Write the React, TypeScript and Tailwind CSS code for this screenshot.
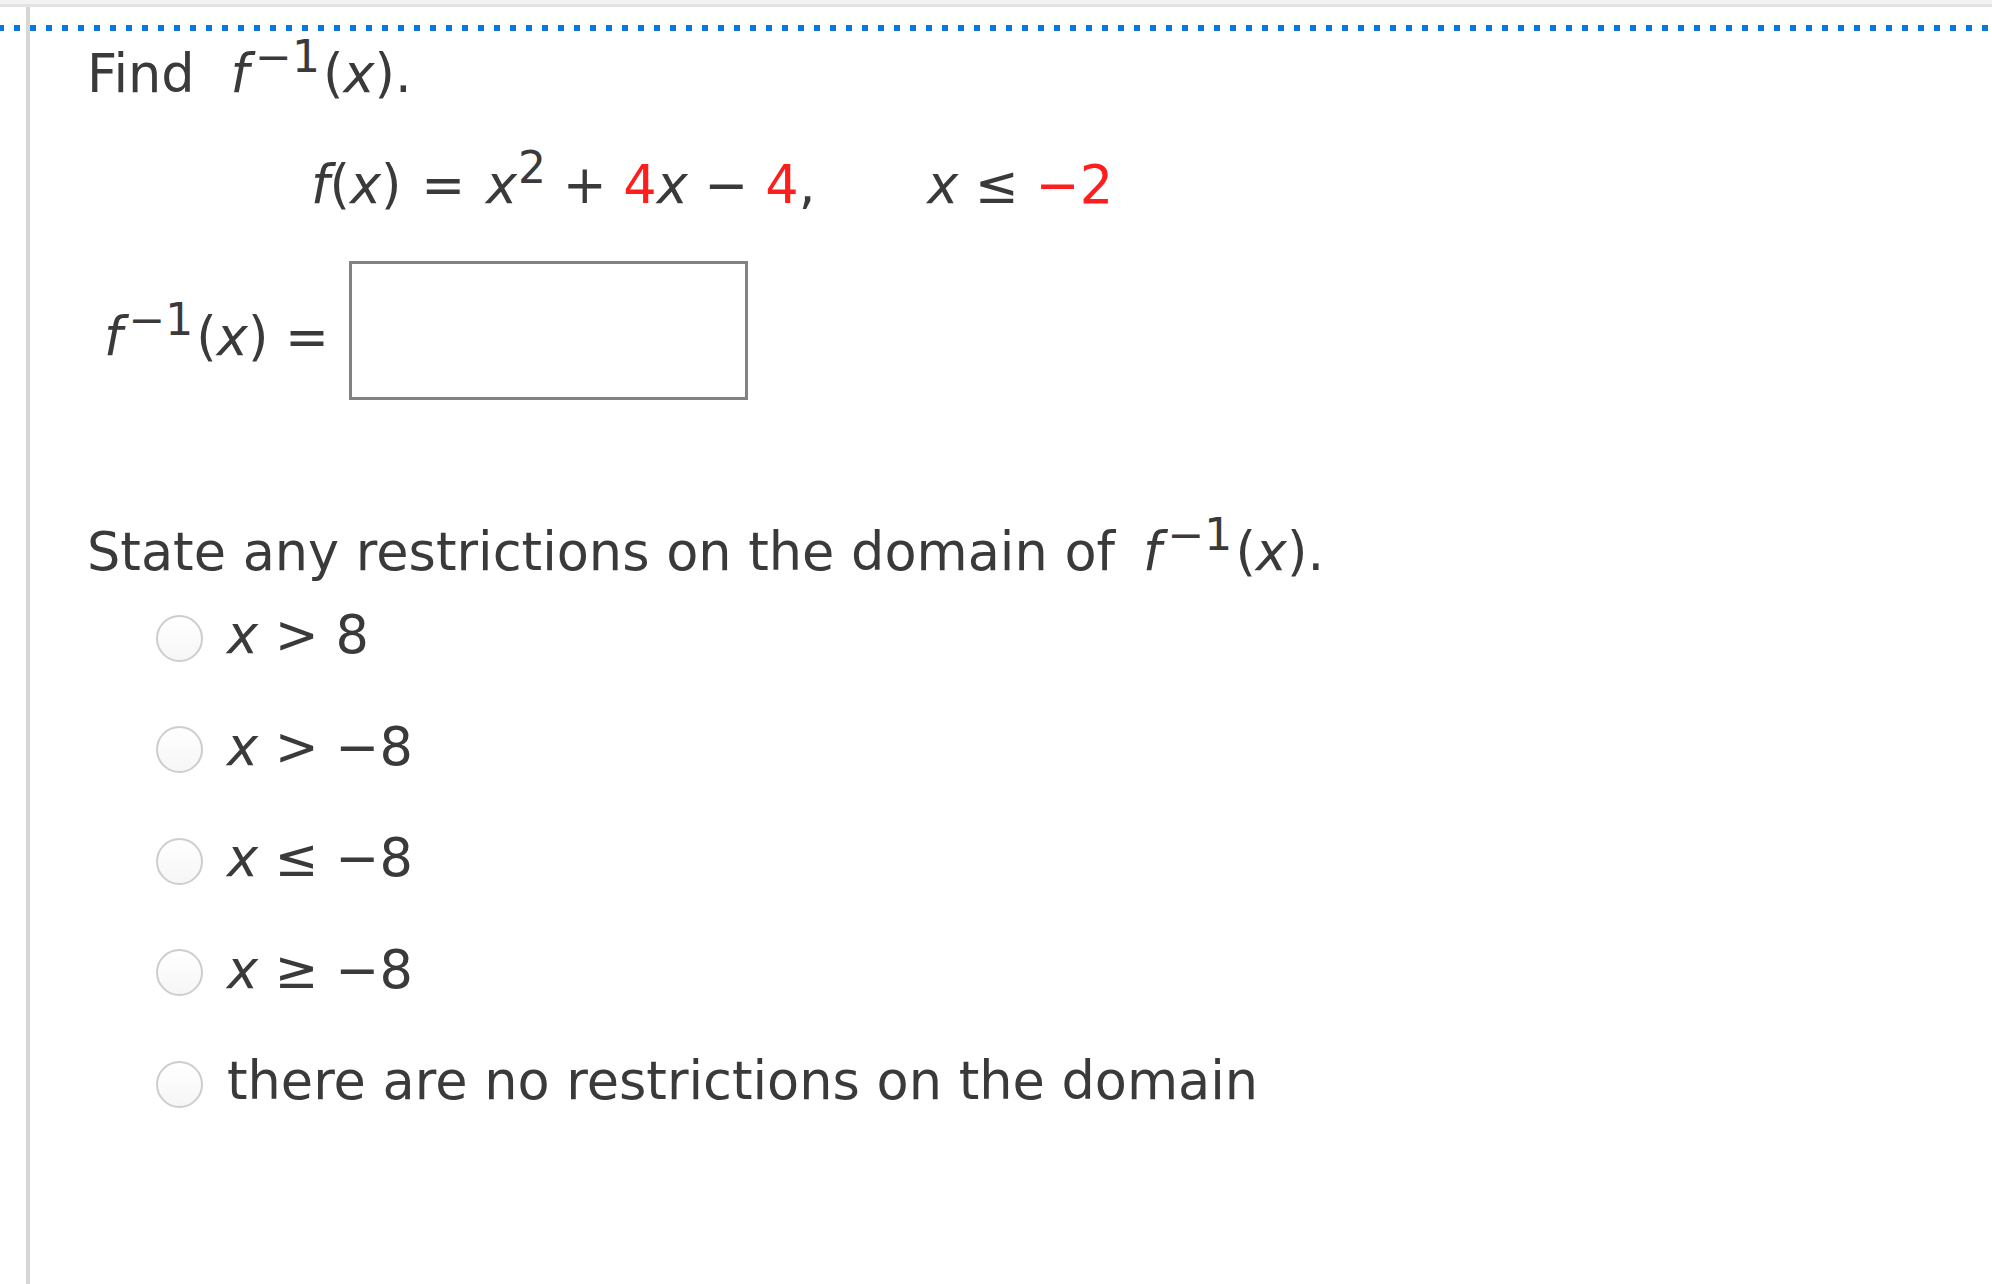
import React from 'react'

const Sup = ({ children, gap = true }: { children: React.ReactNode; gap?: boolean }) => (
  <span className={`relative -top-[20px] text-[44px] ${gap ? 'ml-[6px]' : 'ml-[1px]'}`}>{children}</span>
)

const Red = ({ children }: { children: React.ReactNode }) => (
  <span className="text-[#ff1e1e]">{children}</span>
)

const I = ({ children }: { children: React.ReactNode }) => <span className="italic">{children}</span>

// f^{-1}(x) as it appears in the prompt text
const FInv = () => (
  <>
    <I>f</I>
    <Sup>−1</Sup>
    <span className="ml-[3px]">(</span>
    <I>x</I>)
  </>
)

const Radio = () => (
  <div className="mt-[6px] h-[47px] w-[47px] shrink-0 rounded-full border-2 border-[#cdcdcd] bg-[linear-gradient(#ffffff,#f6f6f6)]" />
)

const options: React.ReactNode[] = [
  <>
    <I>x</I> &gt; 8
  </>,
  <>
    <I>x</I> &gt; −8
  </>,
  <>
    <I>x</I> ≤ −8
  </>,
  <>
    <I>x</I> ≥ −8
  </>,
  <>there are no restrictions on the domain</>,
]

export default function App() {
  return (
    <div className="relative min-h-screen bg-white font-['DejaVu_Sans',sans-serif] text-[52.5px] leading-[64px] text-[#3a3a3a]">
      {/* top chrome */}
      <div className="h-[4px] bg-[#f3f3f3]" />
      <div className="h-[3px] bg-[#e3e3e3]" />

      <div className="flex min-h-[1277px]">
        <div className="w-[26px] shrink-0" />
        <div className="w-[4px] shrink-0 bg-[#d7d7d7]" />

        {/* question body */}
        <div className="flex-1 pl-[57px] pt-[35px]">
          <div>
            Find
            <span className="ml-[36px]">
              <FInv />.
            </span>
          </div>

          <div className="ml-[224px] mt-[44px] whitespace-pre">
            <I>f</I>(<I>x</I>)<span className="ml-[3px]"> = </span>
            <span className="ml-[4px]">
              <I>x</I>
            </span>
            <Sup gap={false}>2</Sup> + <Red>4</Red>
            <I>x</I> − <Red>4</Red>,<span className="ml-[112px]" />
            <I>x</I> ≤ <Red>−2</Red>
          </div>

          <div className="mt-[41px] flex items-center">
            <div className="whitespace-pre pl-[17px] pt-[15px]">
              <FInv /> =
            </div>
            <div className="ml-[20px] h-[139px] w-[399px] border-[3px] border-[#828282] bg-white" />
          </div>

          <div className="mt-[120px]">
            State any restrictions on the domain of
            <span className="ml-[28px]">
              <FInv />.
            </span>
          </div>

          <div className="mt-[16px] flex flex-col gap-[47.5px]">
            {options.map((opt, i) => (
              <div key={i} className="flex items-center">
                <div className="ml-[69px]">
                  <Radio />
                </div>
                <div className="ml-[24px] whitespace-pre">{opt}</div>
              </div>
            ))}
          </div>
        </div>
      </div>

      {/* dotted focus line */}
      <div className="absolute left-0 right-0 top-[25px] h-[6px] bg-[linear-gradient(to_right,#0a78d8_6px,transparent_6px)] bg-[length:16px_6px] bg-[position:-2px_0] bg-repeat-x" />
    </div>
  )
}
